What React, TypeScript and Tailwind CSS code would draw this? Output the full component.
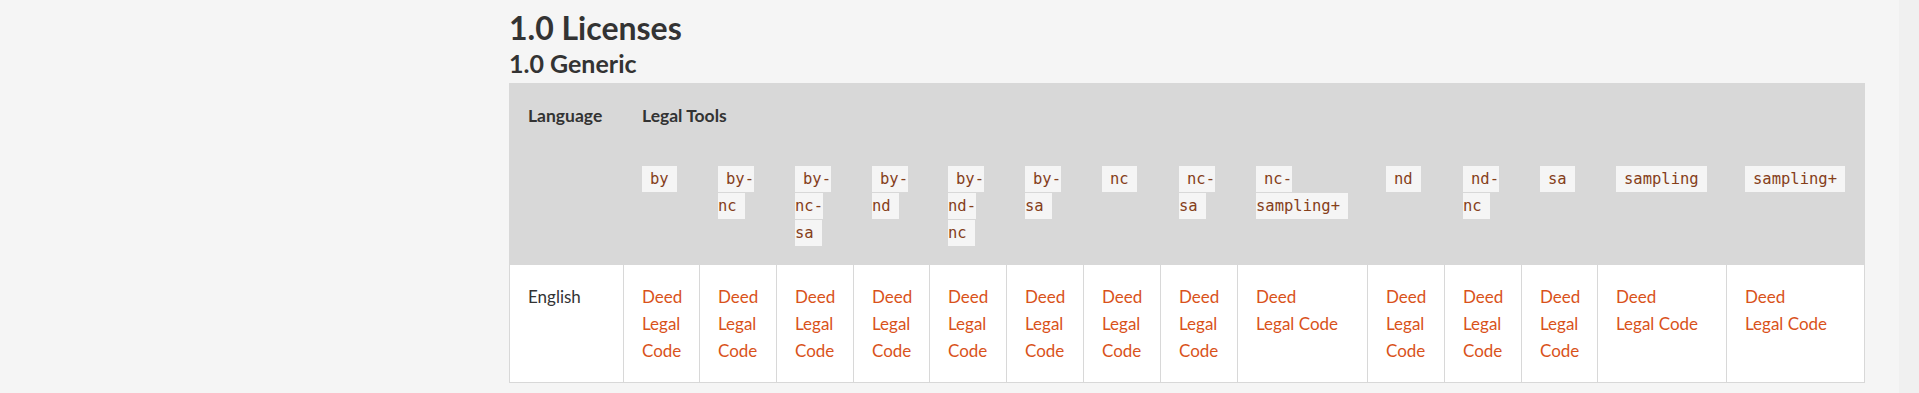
const TOOLS = [
  { name: 'by', col: 'w-[76px]', nowrap: true },
  { name: 'by-nc', col: 'w-[77px]' },
  { name: 'by-nc-sa', col: 'w-[77px]' },
  { name: 'by-nd', col: 'w-[76px]' },
  { name: 'by-nd-nc', col: 'w-[77px]' },
  { name: 'by-sa', col: 'w-[77px]' },
  { name: 'nc', col: 'w-[77px]', nowrap: true },
  { name: 'nc-sa', col: 'w-[77px]' },
  { name: 'nc-sampling+', col: 'w-[130px]' },
  { name: 'nd', col: 'w-[77px]', nowrap: true },
  { name: 'nd-nc', col: 'w-[77px]' },
  { name: 'sa', col: 'w-[76px]', nowrap: true },
  { name: 'sampling', col: 'w-[129px]', nowrap: true },
  { name: 'sampling+', col: 'w-[138px]', nowrap: true },
]

function Code({ children, nowrap }: { children: string; nowrap?: boolean }) {
  return (
    <code
      className={
        'bg-[#f5f5f5] px-[8px] py-[4px] font-["DejaVu_Sans_Mono",monospace] text-[15.5px] leading-[27px] text-[#85401a] ' +
        (nowrap ? 'whitespace-nowrap' : '')
      }
    >
      {children}
    </code>
  )
}

export default function App() {
  return (
    <div className="flex min-h-[393px] bg-[#f5f5f5] font-['Lato',sans-serif] text-[#333333]">
      <div className="w-[509px] shrink-0" />
      <main className="w-[1355px] shrink-0 pt-[9px]">
        <h1 className="text-[32px] font-bold leading-[38px]">1.0 Licenses</h1>
        <h2 className="mt-[2px] text-[25px] font-bold leading-[29px]">
          1.0 Generic
        </h2>
        <table className="mt-[5px] w-[1355px] table-fixed border-collapse text-[17px] leading-[27px]">
          <colgroup>
            <col className="w-[114px]" />
            {TOOLS.map((t) => (
              <col key={t.name} className={t.col} />
            ))}
          </colgroup>
          <thead className="bg-[#d8d8d8]">
            <tr>
              <th
                rowSpan={2}
                className="border border-[#d8d8d8] px-[18px] pt-[18px] pb-[18px] text-left align-top text-[17.5px] font-bold"
              >
                Language
              </th>
              <th
                colSpan={14}
                className="border border-[#d8d8d8] px-[18px] pt-[18px] pb-[18px] text-left align-top text-[17.5px] font-bold"
              >
                Legal Tools
              </th>
            </tr>
            <tr>
              {TOOLS.map((t) => (
                <th
                  key={t.name}
                  className="border border-[#d8d8d8] px-[18px] pt-[18px] pb-[17px] text-left align-top font-['DejaVu_Sans_Mono',monospace] text-[15.5px] font-normal leading-[27px]"
                >
                  <Code nowrap={t.nowrap}>{t.name}</Code>
                </th>
              ))}
            </tr>
          </thead>
          <tbody className="bg-white">
            <tr>
              <td className="border border-[#d8d8d8] px-[18px] py-[18px] align-top">
                English
              </td>
              {TOOLS.map((t) => (
                <td
                  key={t.name}
                  className="border border-[#d8d8d8] px-[18px] py-[18px] align-top"
                >
                  <a href="#" className="block text-[#d9521a]">
                    Deed
                  </a>
                  <a href="#" className="text-[#d9521a]">
                    Legal Code
                  </a>
                </td>
              ))}
            </tr>
          </tbody>
        </table>
      </main>
      <div className="ml-auto w-[20px] shrink-0 bg-[#f0f0f0]" />
    </div>
  )
}
